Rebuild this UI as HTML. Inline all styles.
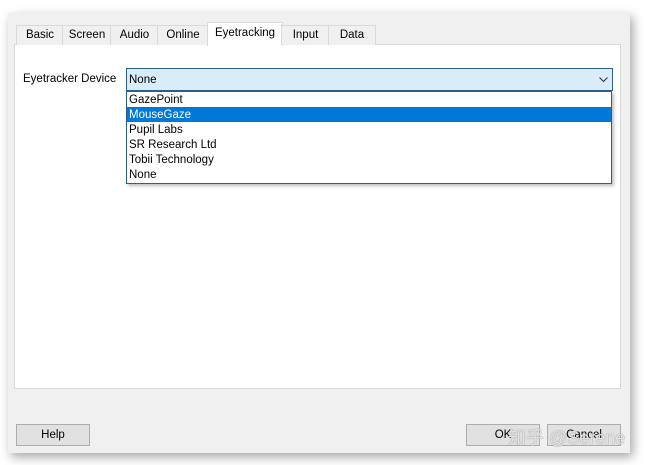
<!DOCTYPE html>
<html><head><style>
body{margin:0;width:653px;height:465px;background:#fff;position:relative;overflow:hidden;font-family:"Liberation Sans","Noto Sans CJK SC",sans-serif;font-size:11.5px;color:#000}
.win{position:absolute;left:8px;top:13px;width:622px;height:440px;background:#f0f0f0;box-shadow:3px 4px 10px rgba(0,0,0,.35)}
.panel{position:absolute;left:14px;top:44px;width:605px;height:343px;background:#fff;border:1px solid #d9d9d9}
.tab{position:absolute;top:25px;height:19px;background:#f0f0f0;border:1px solid #d9d9d9;border-bottom:none;line-height:19px;text-align:center}
.tab.a{top:22px;height:23px;background:#fff;line-height:21px}
.abs{position:absolute}
.btn{position:absolute;top:424px;height:20px;background:#e1e1e1;border:1px solid #adadad;text-align:center;line-height:20px}
.it{height:15px;line-height:16px;padding-left:2px}
</style></head><body>
<div class="win"></div>
<div class="panel"></div>
<div class="tab" style="left:16px;width:46px">Basic</div>
<div class="tab" style="left:62px;width:48px">Screen</div>
<div class="tab" style="left:110px;width:47px">Audio</div>
<div class="tab" style="left:157px;width:50px">Online</div>
<div class="tab a" style="left:207px;width:74px">Eyetracking</div>
<div class="tab" style="left:281px;width:47px">Input</div>
<div class="tab" style="left:328px;width:46px">Data</div>
<div class="abs" style="left:23px;top:73px">Eyetracker Device</div>
<div class="abs" style="left:126px;top:68px;width:483px;height:21px;background:#d9ecfa;border:1px solid #2b5f8e;line-height:22px;padding-left:2px;box-sizing:content-box">None
<svg style="position:absolute;right:4px;top:8px" width="9" height="6"><path d="M0.5 0.5 L4.5 4.5 L8.5 0.5" fill="none" stroke="#333" stroke-width="1.1"/></svg></div>
<div class="abs" style="left:126px;top:91px;width:484px;height:91px;background:#fff;border:1px solid #2b5f8e;box-shadow:2px 2px 3px rgba(0,0,0,.25)">
<div class="it">GazePoint</div>
<div class="it" style="background:#0078d7;color:#fff">MouseGaze</div>
<div class="it">Pupil Labs</div>
<div class="it">SR Research Ltd</div>
<div class="it">Tobii Technology</div>
<div class="it">None</div>
</div>
<div class="btn" style="left:16px;width:72px">Help</div>
<div class="btn" style="left:466px;width:72px">OK</div>
<div class="btn" style="left:547px;width:72px">Cancel</div>
<div class="abs" style="left:508px;top:424px;font-size:18px;color:rgba(240,240,240,.9);text-shadow:0 0 1px #666">知乎 @Serene</div>
</body></html>
